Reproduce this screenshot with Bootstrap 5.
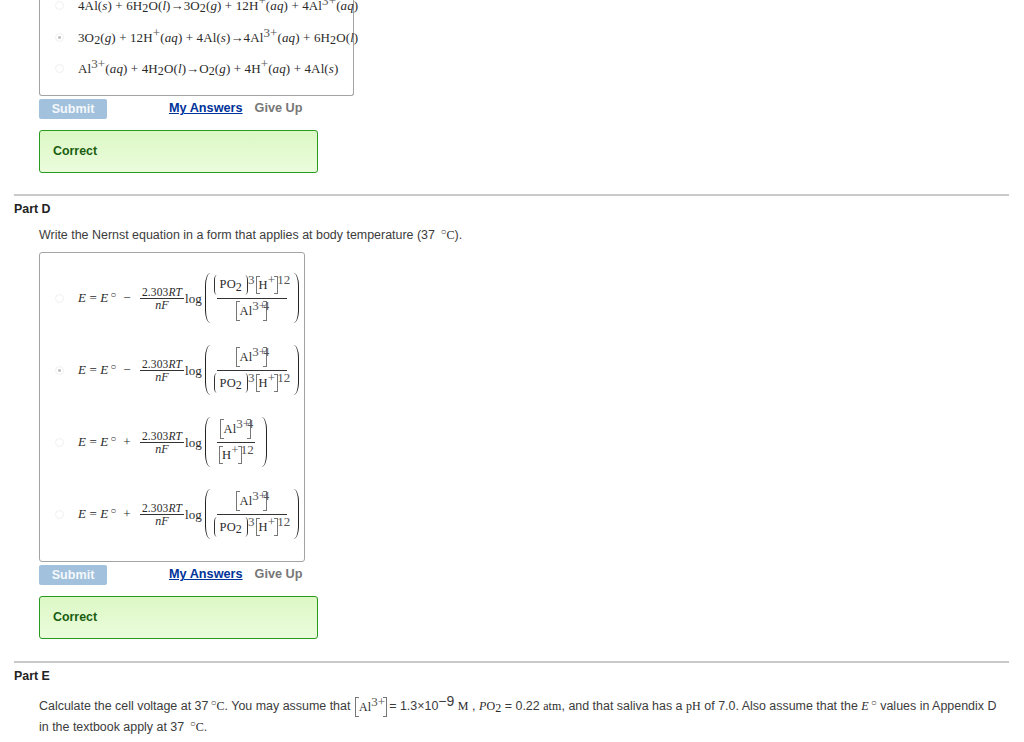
<!DOCTYPE html>
<html lang="en">
<head>
<meta charset="utf-8">
<title>Part D and Part E</title>
<link href="https://cdn.jsdelivr.net/npm/bootstrap@5.3.0/dist/css/bootstrap.min.css" rel="stylesheet">
<style>
html,body{overflow:hidden;height:742px}
body{font-family:"Liberation Sans",Arial,sans-serif;font-size:12px;color:#333;background:#fff}
.sheet{padding:0 15px 0 14px}
.choices{margin-left:25px;border:1px solid #a3a3a3;border-radius:3px;white-space:nowrap}
.choices-a{width:315px;height:106px;margin-top:-10px;border-top:0;padding-bottom:11px}
.choices-d{width:266px;height:310px;padding:9px 0 12px}
.opt-a{height:31.5px;padding-left:15px;gap:14px}
.opt-d{height:72px;padding-left:15px;gap:14px}
.pick{width:9px;height:9px;margin:0;flex:none;background-color:#fff;border:1px solid #e2e2e2;opacity:1}
.pick:checked{background-color:#fff;border-color:#e2e2e2;background-image:radial-gradient(circle,#8a8a8a 0 1.2px,transparent 1.8px)}
.mth{font-family:"Liberation Serif","DejaVu Serif",serif;font-size:13px;color:#2a2a2a;letter-spacing:.12px}
.mth i{font-style:italic}
.up{font-size:13px;position:relative;top:-5px;line-height:0;color:#555}
.dn{font-size:12px;position:relative;top:2px;line-height:0}
.head-eq{width:62px}
.small-frac{width:44px;font-size:12px;line-height:12px;margin:0 1px 0 0}
.small-frac>span:first-child{border-bottom:1px solid #333;width:100%;text-align:center;font-size:11.5px;white-space:nowrap}
.logw{font-size:13px;position:relative;top:1px;margin-right:3px}
.big-frac{margin:0 1px;width:70px}
.big-narrow{width:38px}
.big-top,.big-bot{display:flex;justify-content:center;align-items:center;height:24px;white-space:nowrap;font-size:12.5px}
.big-top{border-bottom:1px solid #333;padding-bottom:2px;height:26px}
.paren{width:11px;height:50px;flex:none;border-left:1.6px solid #222;border-radius:100%/50%}
.paren-r{border-left:0;border-right:1.6px solid #222}
.rp{width:6px;height:20px;flex:none;border-left:1.3px solid #333;border-radius:100%/50%}
.rp-r{border-left:0;border-right:1.3px solid #333}
.sb{display:inline-block;line-height:18px;padding:0 2px;margin:0 1px;border-left:1px solid #777;border-right:1px solid #777;background:linear-gradient(#777,#777) 0 0/3px 1px no-repeat,linear-gradient(#777,#777) 100% 0/3px 1px no-repeat,linear-gradient(#777,#777) 0 100%/3px 1px no-repeat,linear-gradient(#777,#777) 100% 100%/3px 1px no-repeat}
.sb-tall{line-height:20px;padding:0 0 0 3px}
.lap{margin-left:-5px;font-size:12px}
.lap2{margin-left:-2px}
.act-row{margin-left:25px;height:20px;margin-top:3px;margin-bottom:11px}
.act-submit{width:68px;height:20px;padding:0;border:0;border-radius:2px;background:#a2c1dc;color:#f4f8fb;font-weight:700;font-size:12.6px;line-height:20px;opacity:1}
.act-submit:disabled{background:#a2c1dc;color:#f4f8fb;opacity:1}
.act-links{margin-left:62px;gap:12px;font-weight:700;font-size:12.7px}
.act-links a{color:#003399}
.act-links span{color:#777}
.verdict{width:279px;height:43px;margin:0 0 0 25px;padding:0 0 0 13px;display:flex;align-items:center;border:1px solid #2a9a1f;border-radius:3px;background:linear-gradient(#dcf8c5,#ebfcdc);color:#1a5e10;font-weight:700;font-size:12.4px}
.rule{border:0;border-top:2px solid #c9c9c9;opacity:1;margin:21px 0 0}
.rule-e{margin-top:22px}
.part-name{font-weight:700;font-size:12.4px;color:#222;line-height:14px;margin:6px 0 0}
.prose{font-size:12.45px;line-height:21px;color:#3c3c3c;margin:0 0 0 25px}
.prose .mth{font-size:12px}
.prose-d{margin-top:9px;margin-bottom:6px}
.prose-e{margin-top:13px}
.deg{font-size:10px;position:relative;top:-4px;line-height:0;margin-left:2px}
.inline-sb{line-height:20px;vertical-align:middle;margin-right:2px;padding:0 1px 0 3px}
.minus-up{font-size:14px;position:relative;top:-4px;line-height:0}
</style>
</head>
<body>
<main class="sheet">

<section class="choices choices-a">
  <label class="d-flex align-items-center opt-a"><input class="form-check-input pick" type="radio" name="c" disabled><span class="mth">4Al(<i>s</i>) + 6H<span class="dn">2</span>O(<i>l</i>)→3O<span class="dn">2</span>(<i>g</i>) + 12H<span class="up">+</span>(<i>aq</i>) + 4Al<span class="up">3+</span>(<i>aq</i>)</span></label>
  <label class="d-flex align-items-center opt-a"><input class="form-check-input pick" type="radio" name="c" checked disabled><span class="mth">3O<span class="dn">2</span>(<i>g</i>) + 12H<span class="up">+</span>(<i>aq</i>) + 4Al(<i>s</i>)→4Al<span class="up">3+</span>(<i>aq</i>) + 6H<span class="dn">2</span>O(<i>l</i>)</span></label>
  <label class="d-flex align-items-center opt-a"><input class="form-check-input pick" type="radio" name="c" disabled><span class="mth">Al<span class="up">3+</span>(<i>aq</i>) + 4H<span class="dn">2</span>O(<i>l</i>)→O<span class="dn">2</span>(<i>g</i>) + 4H<span class="up">+</span>(<i>aq</i>) + 4Al(<i>s</i>)</span></label>
</section>
<div class="d-flex align-items-center act-row">
  <button class="btn act-submit" type="button" disabled>Submit</button>
  <div class="d-flex act-links"><a href="#">My Answers</a><span>Give Up</span></div>
</div>
<div class="alert verdict" role="status">Correct</div>

<hr class="rule">
<h2 class="part-name">Part D</h2>
<p class="prose prose-d">Write the Nernst equation in a form that applies at body temperature (37 <span class="deg">○</span><span class="mth">C</span>).</p>

<section class="choices choices-d">
  <label class="d-flex align-items-center opt-d"><input class="form-check-input pick" type="radio" name="d" disabled>
    <span class="mth d-flex align-items-center"><span class="head-eq"><i>E</i> = <i>E</i><span class="deg">○</span> &nbsp;−</span>
      <span class="d-inline-flex flex-column align-items-center small-frac"><span>2.303<i>RT</i></span><span><i>nF</i></span></span><span class="logw">log</span>
      <span class="paren"></span>
      <span class="d-inline-flex flex-column big-frac"><span class="big-top"><span class="rp"></span>PO<span class="dn">2</span><span class="rp rp-r"></span><span class="up">3</span><span class="sb">H<span class="up">+</span></span><span class="up lap2">12</span></span><span class="big-bot"><span class="sb sb-tall">Al<span class="up">3+</span></span><span class="up lap">4</span></span></span>
      <span class="paren paren-r"></span></span></label>
  <label class="d-flex align-items-center opt-d"><input class="form-check-input pick" type="radio" name="d" checked disabled>
    <span class="mth d-flex align-items-center"><span class="head-eq"><i>E</i> = <i>E</i><span class="deg">○</span> &nbsp;−</span>
      <span class="d-inline-flex flex-column align-items-center small-frac"><span>2.303<i>RT</i></span><span><i>nF</i></span></span><span class="logw">log</span>
      <span class="paren"></span>
      <span class="d-inline-flex flex-column big-frac"><span class="big-top"><span class="sb sb-tall">Al<span class="up">3+</span></span><span class="up lap">4</span></span><span class="big-bot"><span class="rp"></span>PO<span class="dn">2</span><span class="rp rp-r"></span><span class="up">3</span><span class="sb">H<span class="up">+</span></span><span class="up lap2">12</span></span></span>
      <span class="paren paren-r"></span></span></label>
  <label class="d-flex align-items-center opt-d"><input class="form-check-input pick" type="radio" name="d" disabled>
    <span class="mth d-flex align-items-center"><span class="head-eq"><i>E</i> = <i>E</i><span class="deg">○</span> &nbsp;+</span>
      <span class="d-inline-flex flex-column align-items-center small-frac"><span>2.303<i>RT</i></span><span><i>nF</i></span></span><span class="logw">log</span>
      <span class="paren"></span>
      <span class="d-inline-flex flex-column big-frac big-narrow"><span class="big-top"><span class="sb sb-tall">Al<span class="up">3+</span></span><span class="up lap">4</span></span><span class="big-bot"><span class="sb">H<span class="up">+</span></span><span class="up lap2">12</span></span></span>
      <span class="paren paren-r"></span></span></label>
  <label class="d-flex align-items-center opt-d"><input class="form-check-input pick" type="radio" name="d" disabled>
    <span class="mth d-flex align-items-center"><span class="head-eq"><i>E</i> = <i>E</i><span class="deg">○</span> &nbsp;+</span>
      <span class="d-inline-flex flex-column align-items-center small-frac"><span>2.303<i>RT</i></span><span><i>nF</i></span></span><span class="logw">log</span>
      <span class="paren"></span>
      <span class="d-inline-flex flex-column big-frac"><span class="big-top"><span class="sb sb-tall">Al<span class="up">3+</span></span><span class="up lap">4</span></span><span class="big-bot"><span class="rp"></span>PO<span class="dn">2</span><span class="rp rp-r"></span><span class="up">3</span><span class="sb">H<span class="up">+</span></span><span class="up lap2">12</span></span></span>
      <span class="paren paren-r"></span></span></label>
</section>
<div class="d-flex align-items-center act-row">
  <button class="btn act-submit" type="button" disabled>Submit</button>
  <div class="d-flex act-links"><a href="#">My Answers</a><span>Give Up</span></div>
</div>
<div class="alert verdict" role="status">Correct</div>

<hr class="rule rule-e">
<h2 class="part-name">Part E</h2>
<p class="prose prose-e">Calculate the cell voltage at 37<span class="deg">○</span><span class="mth">C</span>. You may assume that <span class="mth sb inline-sb">Al<span class="up">3+</span></span>= 1.3×10<span class="minus-up">−9</span> <span class="mth">M</span> , <span class="mth"><i>P</i>O<span class="dn">2</span></span> = 0.22 <span class="mth">atm</span>, and that saliva has a <span class="mth">pH</span> of 7.0. Also assume that the <span class="mth"><i>E</i></span><span class="deg">○</span> values in Appendix D in the textbook apply at 37 <span class="deg">○</span><span class="mth">C</span>.</p>

</main>
<script src="https://cdn.jsdelivr.net/npm/bootstrap@5.3.0/dist/js/bootstrap.bundle.min.js"></script>
</body>
</html>
